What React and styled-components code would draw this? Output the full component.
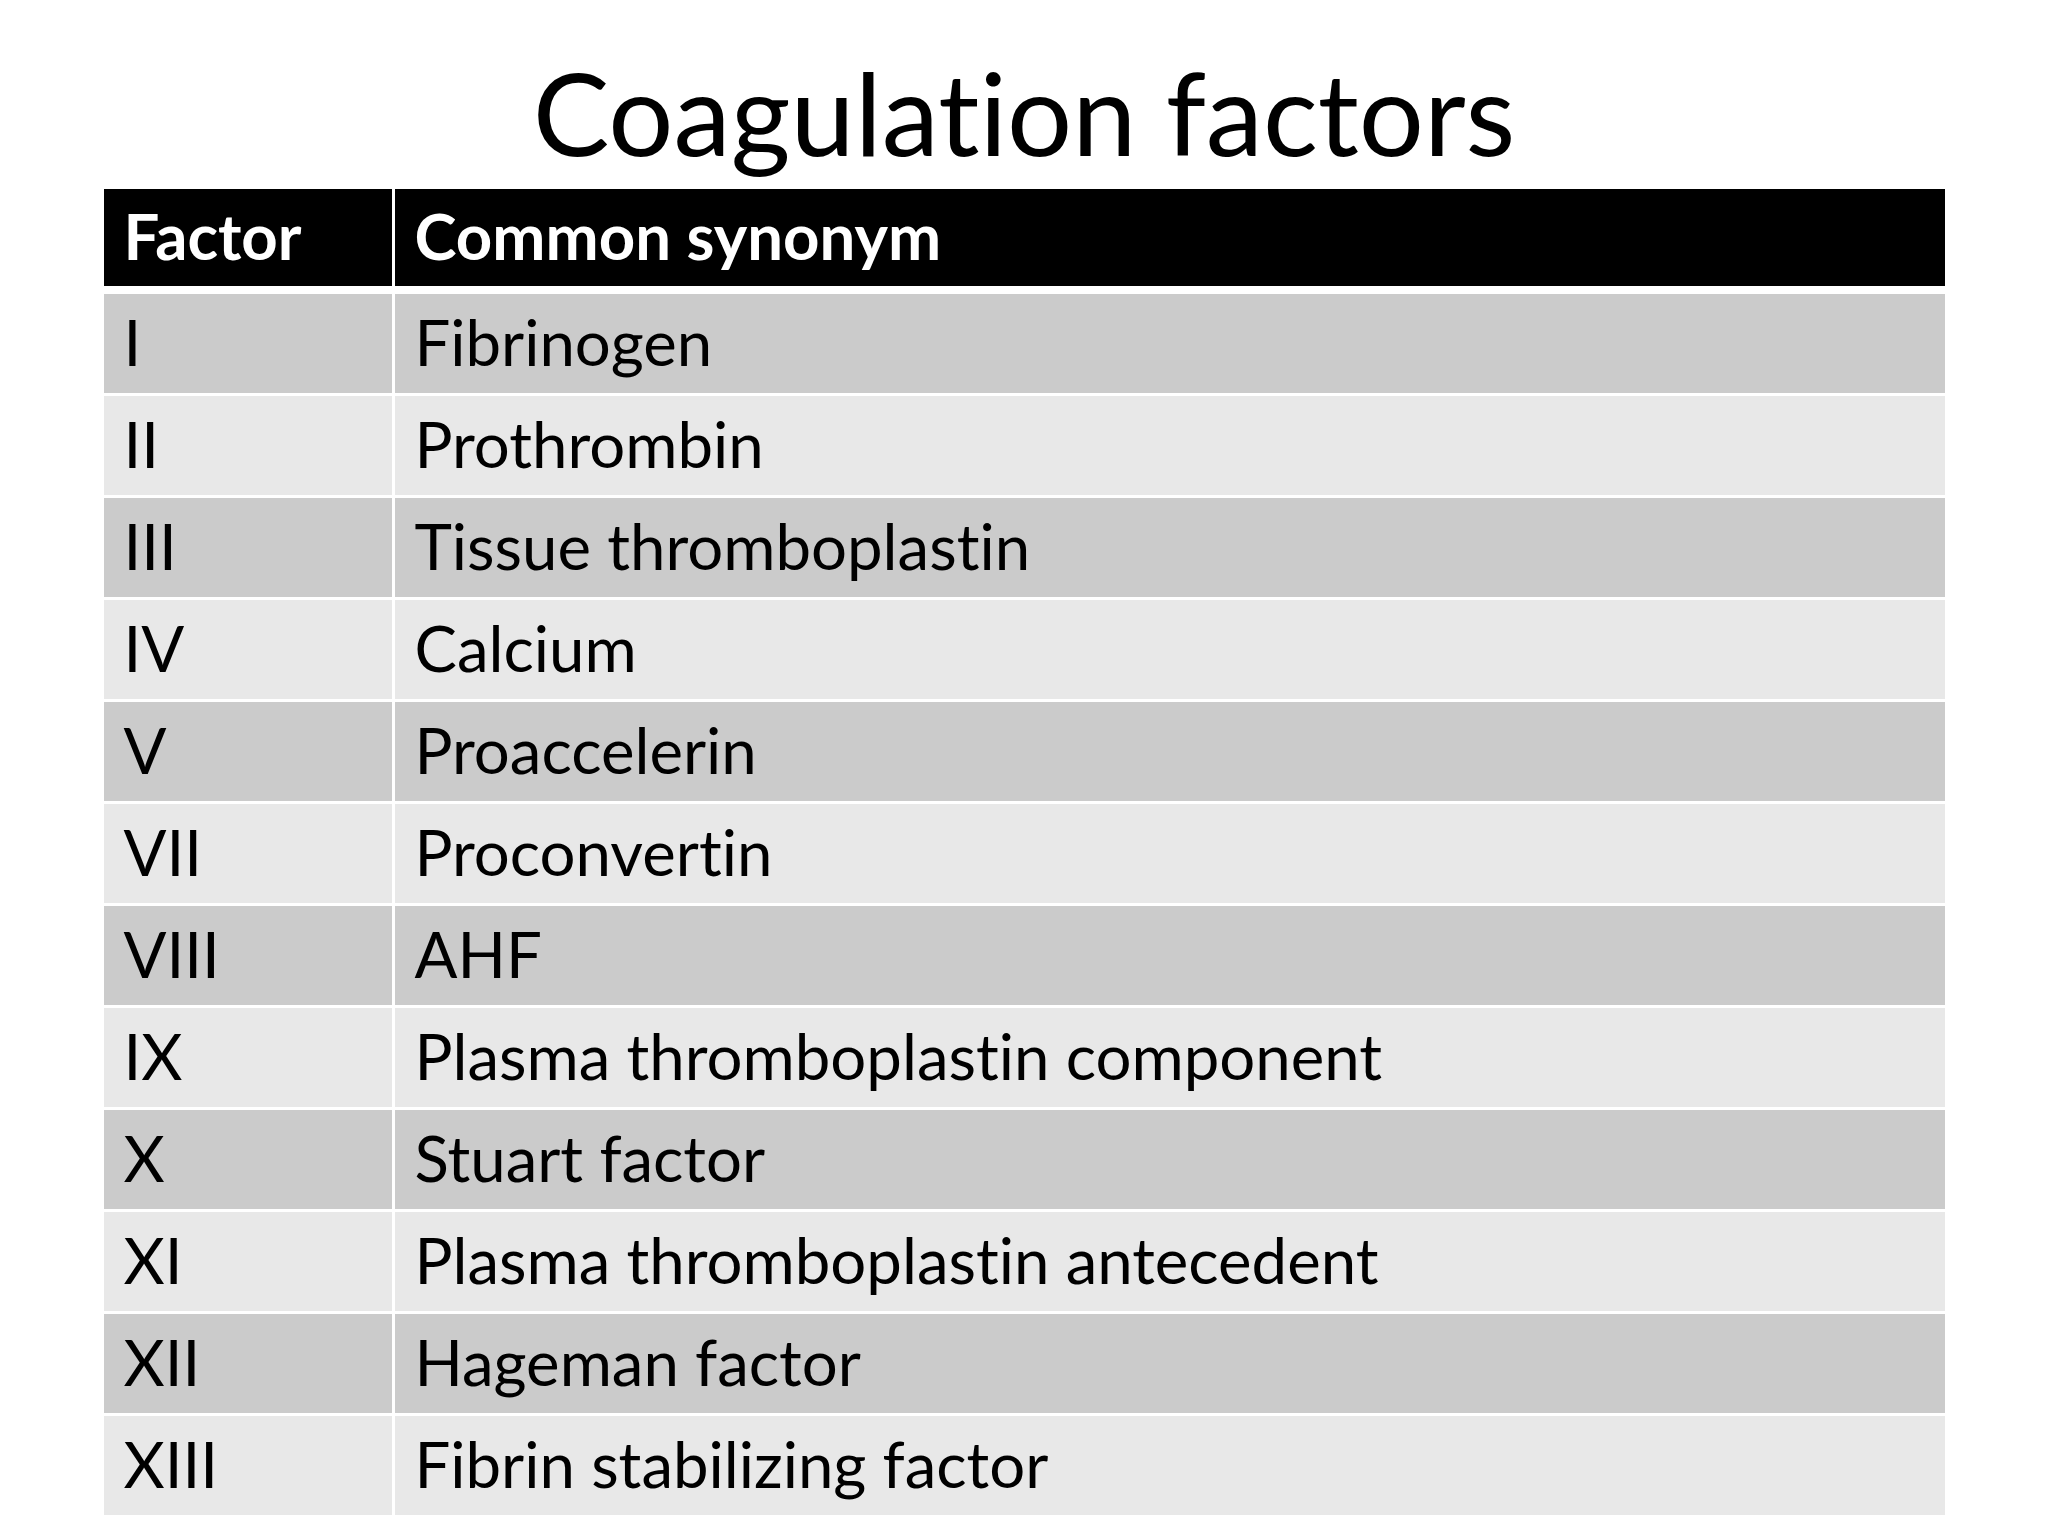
import styled, { createGlobalStyle } from "styled-components"

const GlobalStyle = createGlobalStyle`
    html, body {
        margin: 0;
        padding: 0;
        background: #ffffff;
    }
    body {
        font-family: Lato, "Liberation Sans", sans-serif;
        font-variant-ligatures: none;
    }
`

const Slide = styled.div`
    width: 2048px;
    height: 1536px;
    background: #ffffff;
    display: flex;
    flex-direction: column;
    align-items: center;
    overflow: hidden;
`

const Title = styled.h1`
    margin: 54px 0 0;
    font-family: Lato, "Liberation Sans", sans-serif;
    font-weight: 400;
    font-size: 115px;
    line-height: 1;
    color: #000000;
    font-variant-ligatures: none;
`

const Table = styled.div`
    margin-top: 20px;
    width: 1841px;
    display: grid;
    grid-template-columns: 288px 1fr;
    column-gap: 3px;
    row-gap: 3px;
    background: #ffffff;
`

const Cell = styled.div`
    height: ${(props) => (props.head ? "97px" : "99px")};
    margin-bottom: ${(props) => (props.head ? "5px" : "0")};
    box-sizing: border-box;
    display: flex;
    align-items: center;
    padding: 0 0 4px 20px;
    background: ${(props) =>
        props.head ? "#000000" : props.dark ? "#cbcbcb" : "#e8e8e8"};
    color: ${(props) => (props.head ? "#ffffff" : "#000000")};
    font-family: Lato, "Liberation Sans", sans-serif;
    font-weight: ${(props) => (props.head ? 700 : 400)};
    font-size: 63.5px;
    line-height: 1;
    white-space: nowrap;
    font-variant-ligatures: none;
`

const factors = [
    ["I", "Fibrinogen"],
    ["II", "Prothrombin"],
    ["III", "Tissue thromboplastin"],
    ["IV", "Calcium"],
    ["V", "Proaccelerin"],
    ["VII", "Proconvertin"],
    ["VIII", "AHF"],
    ["IX", "Plasma thromboplastin component"],
    ["X", "Stuart factor"],
    ["XI", "Plasma thromboplastin antecedent"],
    ["XII", "Hageman factor"],
    ["XIII", "Fibrin stabilizing factor"],
]

export default function App() {
    return (
        <>
            <GlobalStyle />
            <Slide>
                <Title>Coagulation factors</Title>
                <Table>
                    <Cell head>Factor</Cell>
                    <Cell head>Common synonym</Cell>
                    {factors.map(([num, name], i) => (
                        <>
                            <Cell key={num + "-n"} dark={i % 2 === 0}>{num}</Cell>
                            <Cell key={num + "-s"} dark={i % 2 === 0}>{name}</Cell>
                        </>
                    ))}
                </Table>
            </Slide>
        </>
    )
}
